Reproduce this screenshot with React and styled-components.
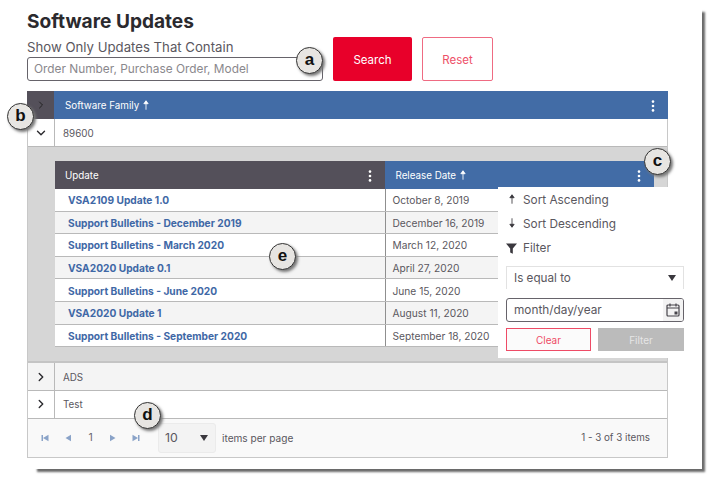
import React from 'react';
import styled, {createGlobalStyle} from 'styled-components';
import {ChevronDown, ChevronRight} from 'lucide-react';

const GlobalStyle = createGlobalStyle`
	html, body {
		margin: 0;
		background: #fff;
	}
	body {
		min-height: 100vh;
		font-family: Inter, "Liberation Sans", sans-serif;
		color: #5a575e;
	}
	* {
		box-sizing: border-box;
	}
`;

const updates = [
	['VSA2109 Update 1.0', 'October 8, 2019'],
	['Support Bulletins - December 2019', 'December 16, 2019'],
	['Support Bulletins - March 2020', 'March 12, 2020'],
	['VSA2020 Update 0.1', 'April 27, 2020'],
	['Support Bulletins - June 2020', 'June 15, 2020'],
	['VSA2020 Update 1', 'August 11, 2020'],
	['Support Bulletins - September 2020', 'September 18, 2020'],
];

const SortArrow = ({down}) => (
	<ArrowIcon viewBox='0 0 7 11' $down={down}>
		<path d='M3.5 1v10M3.5 0.5 1 4h5z' fill='currentColor' stroke='currentColor' strokeWidth='1' />
	</ArrowIcon>
);

const Kebab = () => (
	<KebabIcon viewBox='0 0 4 12'>
		<circle cx='2' cy='1.6' r='1.3' />
		<circle cx='2' cy='6' r='1.3' />
		<circle cx='2' cy='10.4' r='1.3' />
	</KebabIcon>
);

const PagerIcon = ({flip, bar}) => (
	<PagerSlot>
		<PagerSvg viewBox='0 0 8 8' $flip={flip}>
			{bar && <rect x='0.5' y='1' width='1.5' height='6' />}
			<path d={bar ? 'M2 4 7.5 0.8v6.4z' : 'M1.5 4 7 0.8v6.4z'} />
		</PagerSvg>
	</PagerSlot>
);

const App = () => (
	<>
		<GlobalStyle />
		<Frame>
			<Title>Software Updates</Title>
			<Toolbar>
				<Field>
					<FieldLabel htmlFor='update-search'>Show Only Updates That Contain</FieldLabel>
					<SearchInput id='update-search' placeholder='Order Number, Purchase Order, Model' />
				</Field>
				<PrimaryButton>Search</PrimaryButton>
				<OutlineButton>Reset</OutlineButton>
			</Toolbar>

			<Grid>
				<HeaderRow>
					<ExpandHead>
						<ChevronRight size={12} strokeWidth={2} />
					</ExpandHead>
					<BlueHead>
						<HeadLabel>
							Software Family <SortArrow />
						</HeadLabel>
						<Kebab />
					</BlueHead>
				</HeaderRow>

				<FamilyRow $open>
					<ExpandCell>
						<ChevronDown size={14} strokeWidth={2.4} />
					</ExpandCell>
					<FamilyCell>89600</FamilyCell>
				</FamilyRow>

				<Detail>
					<Nested>
						<NestedHead>
							<DarkHead>
								<HeadLabel>Update</HeadLabel>
								<Kebab />
							</DarkHead>
							<BlueHead>
								<HeadLabel>
									Release Date <SortArrow />
								</HeadLabel>
								<Kebab />
							</BlueHead>
						</NestedHead>
						{updates.map(([name, date], i) => (
							<NestedRow key={name} $alt={i % 2 === 1}>
								<UpdateCell>{name}</UpdateCell>
								<DateCell>{date}</DateCell>
							</NestedRow>
						))}

						<Popup>
							<MenuItem>
								<MenuIcon><SortArrow /></MenuIcon>
								Sort Ascending
							</MenuItem>
							<MenuItem>
								<MenuIcon><SortArrow down /></MenuIcon>
								Sort Descending
							</MenuItem>
							<MenuItem>
								<MenuIcon>
									<FunnelIcon viewBox='0 0 10 10'>
										<path d='M0 0.5h10L6.2 5v4.8L3.8 8.6V5z' />
									</FunnelIcon>
								</MenuIcon>
								Filter
							</MenuItem>
							<OperatorSelect>
								Is equal to
								<Caret />
							</OperatorSelect>
							<DateBox>
								month/day/year
								<CalendarButton>
									<CalendarIcon viewBox='0 0 14 14'>
										<rect x='1' y='2' width='12' height='11' rx='1' fill='none' stroke='currentColor' strokeWidth='1.2' />
										<path d='M1 5h12M4 0.5v3M10 0.5v3' fill='none' stroke='currentColor' strokeWidth='1.2' />
										<rect x='8.5' y='8.5' width='3' height='3' fill='currentColor' />
									</CalendarIcon>
								</CalendarButton>
							</DateBox>
							<PopupActions>
								<ClearButton>Clear</ClearButton>
								<FilterButton>Filter</FilterButton>
							</PopupActions>
						</Popup>
					</Nested>
				</Detail>

				<FamilyRow $alt>
					<ExpandCell>
						<ChevronRight size={14} strokeWidth={2.4} />
					</ExpandCell>
					<FamilyCell>ADS</FamilyCell>
				</FamilyRow>
				<FamilyRow>
					<ExpandCell>
						<ChevronRight size={14} strokeWidth={2.4} />
					</ExpandCell>
					<FamilyCell>Test</FamilyCell>
				</FamilyRow>

				<Pager>
					<PagerNav>
						<PagerIcon bar />
						<PagerIcon />
						<PageNumber>1</PageNumber>
						<PagerIcon flip />
						<PagerIcon flip bar />
					</PagerNav>
					<SizeSelect>
						10
						<Caret />
					</SizeSelect>
					<PagerText>items per page</PagerText>
					<PagerCount>1 - 3 of 3 items</PagerCount>
				</Pager>
			</Grid>

			<Badge $left={296} $top={47}>a</Badge>
			<Badge $left={7} $top={103}>b</Badge>
			<Badge $left={644} $top={148}>c</Badge>
			<Badge $left={134} $top={402}>d</Badge>
			<Badge $left={269} $top={243}>e</Badge>
		</Frame>
	</>
);

const Frame = styled.div`
	position: relative;
	isolation: isolate;
	width: 702px;
	height: 469px;
	padding: 11px 34px 0 27px;
	background: #fff;
	&::before {
		content: '';
		position: absolute;
		z-index: -1;
		left: 34px;
		top: 9px;
		right: 0;
		bottom: 0;
		box-shadow: 3px 3px 2px #6a6a6a;
	}
`;
const Title = styled.h1`
	margin: 0;
	height: 26px;
	font-size: 19.1px;
	line-height: 20px;
	font-weight: 700;
	color: #2b2a2e;
`;
const Toolbar = styled.div`
	display: flex;
	align-items: flex-end;
	gap: 10px;
	height: 44px;
`;
const Field = styled.div`
	display: flex;
	flex-direction: column;
	width: 296px;
`;
const FieldLabel = styled.label`
	font-size: 13.2px;
	line-height: 20px;
	color: #5a575e;
`;
const SearchInput = styled.input`
	height: 24px;
	padding: 0 6px;
	border: 1px solid #66636a;
	border-radius: 3px;
	font: 11.85px Inter, sans-serif;
	outline: none;
	&::placeholder {
		color: #8a888d;
		opacity: 1;
	}
`;
const PrimaryButton = styled.button`
	width: 79px;
	height: 44px;
	padding: 1px 0 0;
	border: 0;
	border-radius: 2px;
	background: #e8002a;
	color: #fff;
	font: 11.5px Inter, sans-serif;
`;
const OutlineButton = styled.button`
	width: 71px;
	height: 44px;
	padding: 1px 0 0;
	border: 1px solid #ef6b82;
	border-radius: 2px;
	background: #fff;
	color: #ee5068;
	font: 11.5px Inter, sans-serif;
`;
const Grid = styled.div`
	width: 641px;
	margin-top: 10px;
	border: solid #c8c8c8;
	border-width: 0 1px 1px;
`;
const HeaderRow = styled.div`
	display: grid;
	grid-template-columns: 27px 1fr;
	height: 28px;
	margin: 0 -1px;
`;
const ExpandHead = styled.div`
	display: flex;
	align-items: center;
	justify-content: center;
	background: #54505a;
	color: #222;
`;
const BlueHead = styled.div`
	display: flex;
	align-items: center;
	justify-content: space-between;
	padding: 1px 13px 0 11px;
	background: #426ca6;
	color: #fff;
`;
const DarkHead = styled(BlueHead)`
	padding-left: 10px;
	background: #54505a;
`;
const HeadLabel = styled.span`
	display: flex;
	align-items: center;
	gap: 4px;
	font-size: 9.8px;
`;
const ArrowIcon = styled.svg`
	width: 6px;
	height: 10px;
	margin-top: -2px;
	transform: ${p => (p.$down ? 'rotate(180deg)' : 'none')};
`;
const KebabIcon = styled.svg`
	width: 4px;
	height: 12px;
	fill: currentColor;
`;
const FamilyRow = styled.div`
	display: grid;
	grid-template-columns: 27px 1fr;
	height: ${p => (p.$open ? '28px' : '27.8px')};
	border-bottom: 1px solid #b9b9b9;
	background: ${p => (p.$alt ? '#f4f4f4' : '#fff')};
`;
const ExpandCell = styled.div`
	display: flex;
	align-items: center;
	justify-content: center;
	border-right: 1px solid #b9b9b9;
	color: #2b2a2e;
`;
const FamilyCell = styled.div`
	display: flex;
	align-items: center;
	padding: 1px 0 0 8px;
	font-size: 9.8px;
`;
const Detail = styled.div`
	padding: 14px 13px 14px 27px;
	border-bottom: 2px solid #c4c4c4;
	background: #d6d6d6;
`;
const Nested = styled.div`
	position: relative;
	width: 599px;
`;
const NestedHead = styled.div`
	display: grid;
	grid-template-columns: 329.5px 1fr;
	height: 28px;
`;
const NestedRow = styled.div`
	display: grid;
	grid-template-columns: 329.5px 1fr;
	height: 22.6px;
	border-bottom: 1px solid #b9b9b9;
	background: ${p => (p.$alt ? '#f4f4f4' : '#fff')};
`;
const UpdateCell = styled.div`
	display: flex;
	align-items: center;
	padding: 1px 0 0 13px;
	font-size: 10.2px;
	font-weight: 700;
	color: #3f68a6;
`;
const DateCell = styled.div`
	display: flex;
	align-items: center;
	padding: 1px 0 0 7px;
	border-left: 1px solid #8f8f8f;
	font-size: 10.2px;
`;
const Popup = styled.div`
	position: absolute;
	top: 26px;
	right: -30px;
	width: 186px;
	height: 171px;
	padding: 0 0 0 8px;
	background: #fff;
`;
const MenuItem = styled.div`
	display: flex;
	align-items: center;
	height: 24px;
	font-size: 11.8px;
	&:first-child {
		margin-top: 1px;
	}
`;
const MenuIcon = styled.span`
	display: flex;
	justify-content: center;
	width: 11px;
	margin-right: 6px;
	color: #3a383e;
`;
const FunnelIcon = styled.svg`
	width: 11px;
	height: 11px;
	fill: currentColor;
`;
const OperatorSelect = styled.div`
	display: flex;
	align-items: center;
	justify-content: space-between;
	height: 23px;
	margin-top: 6px;
	padding: 0 7px;
	border: solid #e2e2e2;
	border-width: 1px 1px 0;
	font-size: 11.7px;
`;
const Caret = styled.i`
	width: 0;
	height: 0;
	border: 4px solid transparent;
	border-top: 6px solid #3a383e;
	border-bottom: 0;
`;
const DateBox = styled.div`
	display: flex;
	align-items: center;
	justify-content: space-between;
	height: 24px;
	margin-top: 9px;
	padding-left: 7px;
	border: 1px solid #66636a;
	border-radius: 3px;
	font-size: 11.8px;
	overflow: hidden;
`;
const CalendarButton = styled.span`
	display: flex;
	align-items: center;
	justify-content: center;
	width: 20px;
	height: 100%;
	background: #f3f3f3;
	color: #46444a;
`;
const CalendarIcon = styled.svg`
	width: 14px;
	height: 14px;
`;
const PopupActions = styled.div`
	display: grid;
	grid-template-columns: 85px 86px;
	gap: 7px;
	margin-top: 6px;
`;
const ClearButton = styled.button`
	height: 23px;
	padding: 0;
	border: 1px solid #ee4b66;
	background: #fbfbfb;
	color: #ee4b66;
	font: 10px Inter, sans-serif;
`;
const FilterButton = styled.button`
	height: 23px;
	padding: 0;
	border: 0;
	background: #bbb;
	color: #e6e6e6;
	font: 10px Inter, sans-serif;
`;
const Pager = styled.div`
	display: flex;
	align-items: center;
	height: 38px;
	padding: 0 17px 0 6px;
	background: #f9f9f9;
`;
const PagerNav = styled.div`
	display: grid;
	grid-template-columns: repeat(5, 22.7px);
	width: 124px;
	justify-items: center;
	align-items: center;
	color: #8aa3c8;
`;
const PagerSlot = styled.span`
	display: flex;
`;
const PagerSvg = styled.svg`
	width: 8px;
	height: 8px;
	fill: currentColor;
	transform: ${p => (p.$flip ? 'scaleX(-1)' : 'none')};
`;
const PageNumber = styled.span`
	font-size: 10.5px;
	color: #6a676e;
`;
const SizeSelect = styled.div`
	display: flex;
	align-items: center;
	justify-content: space-between;
	width: 58px;
	height: 30px;
	padding: 0 7px 0 6px;
	border: 1px solid #ebebeb;
	border-radius: 3px;
	background: #f3f3f3;
	font-size: 12.3px;
`;
const PagerText = styled.span`
	margin-left: 6px;
	font-size: 10.1px;
`;
const PagerCount = styled.span`
	margin-left: auto;
	font-size: 9.8px;
`;
const Badge = styled.div`
	position: absolute;
	left: ${p => p.$left}px;
	top: ${p => p.$top}px;
	display: flex;
	align-items: center;
	justify-content: center;
	width: 27px;
	height: 27px;
	padding-bottom: 2px;
	border: 1.5px solid #333;
	border-radius: 50%;
	background: #e7e5e2;
	box-shadow: 2px 2px 3px #777;
	color: #111;
	font: 700 17px "Liberation Sans", sans-serif;
`;
export default App;
